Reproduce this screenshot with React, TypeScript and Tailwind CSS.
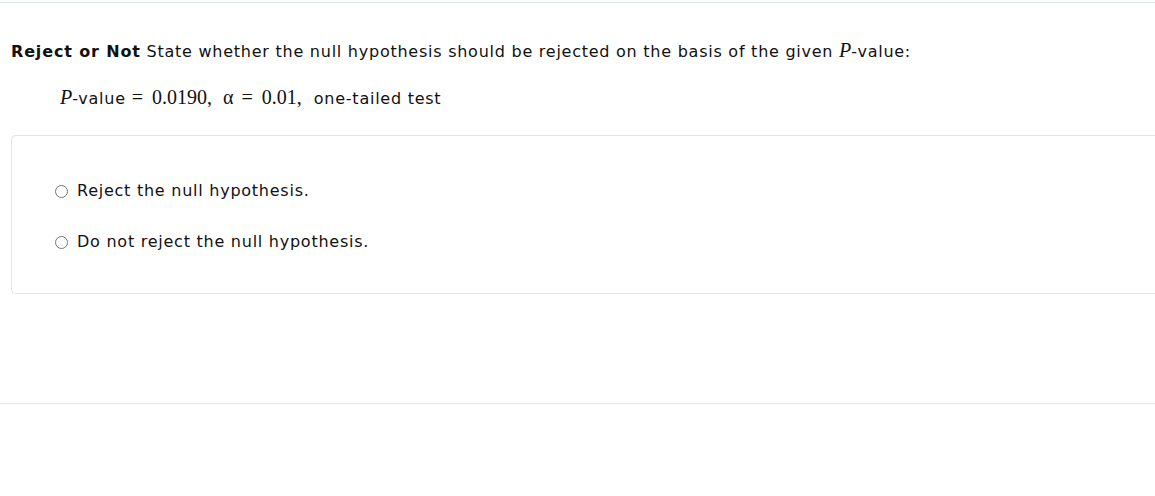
import React from "react";

const sans = "font-['DejaVu_Sans',Verdana,sans-serif]";
const serif = "font-['Liberation_Serif','DejaVu_Serif',serif]";
const mathText = `${serif} text-[20px] leading-none tracking-normal`;

function Radio({ label }: { label: string }) {
  return (
    <label className="flex h-[20px] items-center gap-[9px] text-[16px] leading-[20px] tracking-[0.75px] text-[#111]">
      <span className="inline-block h-[13px] w-[13px] shrink-0 rounded-full border border-[#767676] bg-white" />
      <span>{label}</span>
    </label>
  );
}

export default function App() {
  return (
    <div className={`min-h-[496px] w-[1155px] bg-white ${sans}`}>
      <div className="h-[2px]" />
      <div className="border-t border-[#dfe5e5]" />
      <div className="pl-[11px]">
        <p className="mt-[37px] h-[20px] text-[16px] leading-[20px] tracking-[0.75px] text-[#111]">
          <b className="font-bold tracking-[0.85px]">Reject or Not</b> State whether the null hypothesis should be
          rejected on the basis of the given <i className={mathText}>P</i>-value:
        </p>
        <p className="mt-[27px] h-[20px] pl-[49px] text-[16px] leading-[20px] tracking-[0.75px] text-[#111]">
          <i className={mathText}>P</i>-value
          <span className={`${mathText} ml-[6px]`}>=</span>
          <span className={`${mathText} ml-[9px] tracking-[0.4px]`}>0.0190,</span>
          <span className={`${mathText} ml-[11px]`}>α</span>
          <span className={`${mathText} ml-[8px]`}>=</span>
          <span className={`${mathText} ml-[9px] tracking-[0.4px]`}>0.01,</span>
          <span className="ml-[12px]">one-tailed test</span>
        </p>
      </div>
      <div className="ml-[11px] mt-[28px] flex h-[159px] flex-col gap-[31px] rounded-l-[5px] border border-r-0 border-[#dfe5e5] pl-[43px] pt-[45px]">
        <Radio label="Reject the null hypothesis." />
        <Radio label="Do not reject the null hypothesis." />
      </div>
      <div className="mt-[109px] border-t border-[#e3e6e6]" />
    </div>
  );
}
